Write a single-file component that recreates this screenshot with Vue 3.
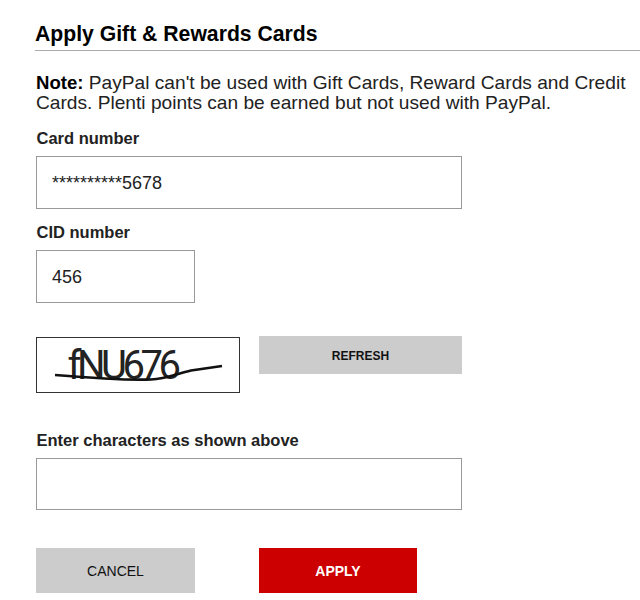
<template>
  <div class="gift-form">
    <h2 class="title">Apply Gift &amp; Rewards Cards</h2>

    <p class="note"><b>Note:</b> PayPal can't be used with Gift Cards, Reward Cards and Credit Cards. Plenti points can be earned but not used with PayPal.</p>

    <label class="field-label first">Card number</label>
    <input class="text-input wide" type="text" :value="cardNumber" />

    <label class="field-label cid">CID number</label>
    <input class="text-input short" type="text" :value="cid" />

    <div class="captcha-row">
      <div class="captcha">
        <span class="captcha-text">fNU676</span>
        <svg class="captcha-line" width="204" height="56" viewBox="0 0 204 56">
          <path d="M19 38 C55 41 88 43.500 115 42.500 C130 42 140 37 155 33.500 L186 29" fill="none" stroke="#111" stroke-width="2.600" />
        </svg>
      </div>
      <button class="btn refresh">REFRESH</button>
    </div>

    <label class="field-label enter">Enter characters as shown above</label>
    <input class="text-input wide tall" type="text" />

    <div class="actions">
      <button class="btn cancel">CANCEL</button>
      <button class="btn apply">APPLY</button>
    </div>
  </div>
</template>

<script setup>
const cardNumber = '**********5678'
const cid = '456'
</script>

<style>
body {
  background: #fff;
}
</style>

<style scoped>
.gift-form {
  height: 600px;
  box-sizing: border-box;
  padding: 21px 0 0 36px;
  font-family: "Liberation Sans", Arial, sans-serif;
  color: #111;
  overflow: hidden;
}

.title {
  margin: 0 0 0 -1px;
  padding: 1px 0 5px;
  font-size: 21.200px;
  line-height: 23px;
  font-weight: bold;
  color: #000;
  border-bottom: 1px solid #aaa;
}

.note {
  margin: 22px 0 0;
  width: 600px;
  font-size: 19.150px;
  line-height: 20px;
  color: #222;
}

.note b {
  font-size: 18.600px;
  color: #000;
}

.field-label {
  display: block;
  padding-left: 0.500px;
  font-size: 16.500px;
  line-height: 20px;
  font-weight: bold;
  color: #222;
}

.first {
  margin-top: 15px;
}

.cid {
  margin-top: 13px;
}

.enter {
  margin-top: 37px;
}

.text-input {
  display: block;
  box-sizing: border-box;
  margin-top: 8px;
  height: 53px;
  padding: 2px 15px 0;
  border: 1px solid #999;
  border-radius: 0;
  outline: none;
  background: #fff;
  font-family: inherit;
  font-size: 18px;
  color: #222;
}

.wide {
  width: 426px;
}

.short {
  width: 159px;
}

.tall {
  height: 52px;
}

.captcha-row {
  display: flex;
  align-items: flex-start;
  gap: 19px;
  margin-top: 33px;
}

.captcha {
  position: relative;
  box-sizing: border-box;
  width: 204px;
  height: 56px;
  margin-top: 1px;
  border: 1px solid #333;
  text-align: center;
}

.captcha-text {
  display: block;
  padding-right: 32px;
  font-family: Roboto, "Liberation Sans", sans-serif;
  font-size: 40px;
  line-height: 55px;
  letter-spacing: -4.500px;
  color: #222;
}

.captcha-line {
  position: absolute;
  top: -1px;
  left: -1px;
}

.btn {
  display: block;
  border: none;
  border-radius: 0;
  padding: 0;
  font-family: inherit;
  cursor: pointer;
}

.refresh {
  width: 203px;
  height: 38px;
  padding-top: 2px;
  background: #ccc;
  color: #111;
  font-size: 12px;
  font-weight: bold;
}

.actions {
  display: flex;
  gap: 64px;
  margin-top: 38px;
}

.cancel {
  width: 159px;
  height: 45px;
  background: #ccc;
  color: #111;
  font-size: 14px;
}

.apply {
  width: 158px;
  height: 45px;
  background: #cc0000;
  color: #fff;
  font-size: 14px;
  font-weight: bold;
}
</style>
